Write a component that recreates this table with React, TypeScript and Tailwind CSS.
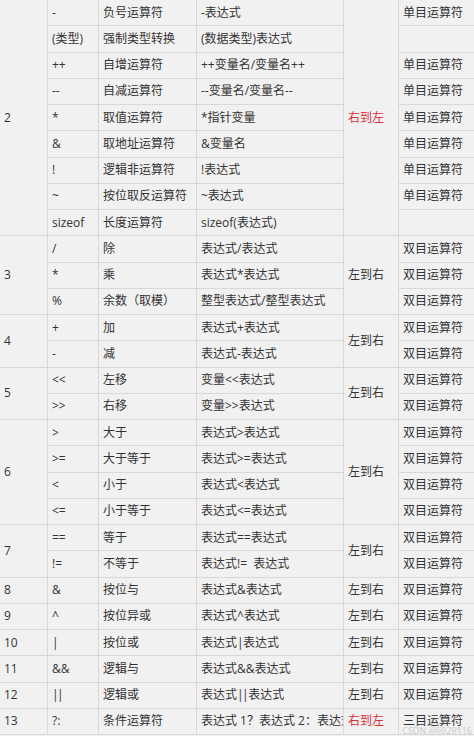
import React from "react";

type Cell = { t: string; span?: number; red?: boolean; col: number; tight?: boolean };

const rows: Cell[][] = [
  [
    { t: "2", span: 9, col: 1 },
    { t: "-", col: 2 },
    { t: "负号运算符", col: 3 },
    { t: "-表达式", col: 4 },
    { t: "右到左", span: 9, red: true, col: 5 },
    { t: "单目运算符", col: 6 },
  ],
  [{ t: "(类型)", col: 2 }, { t: "强制类型转换", col: 3 }, { t: "(数据类型)表达式", col: 4 }, { t: "", col: 6 }],
  [{ t: "++", col: 2 }, { t: "自增运算符", col: 3 }, { t: "++变量名/变量名++", col: 4 }, { t: "单目运算符", col: 6 }],
  [{ t: "--", col: 2 }, { t: "自减运算符", col: 3 }, { t: "--变量名/变量名--", col: 4 }, { t: "单目运算符", col: 6 }],
  [{ t: "*", col: 2 }, { t: "取值运算符", col: 3 }, { t: "*指针变量", col: 4 }, { t: "单目运算符", col: 6 }],
  [{ t: "&", col: 2 }, { t: "取地址运算符", col: 3 }, { t: "&变量名", col: 4 }, { t: "单目运算符", col: 6 }],
  [{ t: "!", col: 2 }, { t: "逻辑非运算符", col: 3 }, { t: "!表达式", col: 4 }, { t: "单目运算符", col: 6 }],
  [{ t: "~", col: 2 }, { t: "按位取反运算符", col: 3 }, { t: "~表达式", col: 4 }, { t: "单目运算符", col: 6 }],
  [{ t: "sizeof", col: 2 }, { t: "长度运算符", col: 3 }, { t: "sizeof(表达式)", col: 4 }, { t: "", col: 6 }],
  [
    { t: "3", span: 3, col: 1 },
    { t: "/", col: 2 },
    { t: "除", col: 3 },
    { t: "表达式/表达式", col: 4 },
    { t: "左到右", span: 3, col: 5 },
    { t: "双目运算符", col: 6 },
  ],
  [{ t: "*", col: 2 }, { t: "乘", col: 3 }, { t: "表达式*表达式", col: 4 }, { t: "双目运算符", col: 6 }],
  [{ t: "%", col: 2 }, { t: "余数（取模）", col: 3 }, { t: "整型表达式/整型表达式", col: 4 }, { t: "双目运算符", col: 6 }],
  [
    { t: "4", span: 2, col: 1 },
    { t: "+", col: 2 },
    { t: "加", col: 3 },
    { t: "表达式+表达式", col: 4 },
    { t: "左到右", span: 2, col: 5 },
    { t: "双目运算符", col: 6 },
  ],
  [{ t: "-", col: 2 }, { t: "减", col: 3 }, { t: "表达式-表达式", col: 4 }, { t: "双目运算符", col: 6 }],
  [
    { t: "5", span: 2, col: 1 },
    { t: "<<", col: 2 },
    { t: "左移", col: 3 },
    { t: "变量<<表达式", col: 4 },
    { t: "左到右", span: 2, col: 5 },
    { t: "双目运算符", col: 6 },
  ],
  [{ t: ">>", col: 2 }, { t: "右移", col: 3 }, { t: "变量>>表达式", col: 4 }, { t: "双目运算符", col: 6 }],
  [
    { t: "6", span: 4, col: 1 },
    { t: ">", col: 2 },
    { t: "大于", col: 3 },
    { t: "表达式>表达式", col: 4 },
    { t: "左到右", span: 4, col: 5 },
    { t: "双目运算符", col: 6 },
  ],
  [{ t: ">=", col: 2 }, { t: "大于等于", col: 3 }, { t: "表达式>=表达式", col: 4 }, { t: "双目运算符", col: 6 }],
  [{ t: "<", col: 2 }, { t: "小于", col: 3 }, { t: "表达式<表达式", col: 4 }, { t: "双目运算符", col: 6 }],
  [{ t: "<=", col: 2 }, { t: "小于等于", col: 3 }, { t: "表达式<=表达式", col: 4 }, { t: "双目运算符", col: 6 }],
  [
    { t: "7", span: 2, col: 1 },
    { t: "==", col: 2 },
    { t: "等于", col: 3 },
    { t: "表达式==表达式", col: 4 },
    { t: "左到右", span: 2, col: 5 },
    { t: "双目运算符", col: 6 },
  ],
  [{ t: "!=", col: 2 }, { t: "不等于", col: 3 }, { t: "表达式!=  表达式", col: 4 }, { t: "双目运算符", col: 6 }],
  [
    { t: "8", col: 1 },
    { t: "&", col: 2 },
    { t: "按位与", col: 3 },
    { t: "表达式&表达式", col: 4 },
    { t: "左到右", col: 5 },
    { t: "双目运算符", col: 6 },
  ],
  [
    { t: "9", col: 1 },
    { t: "^", col: 2 },
    { t: "按位异或", col: 3 },
    { t: "表达式^表达式", col: 4 },
    { t: "左到右", col: 5 },
    { t: "双目运算符", col: 6 },
  ],
  [
    { t: "10", col: 1 },
    { t: "|", col: 2 },
    { t: "按位或", col: 3 },
    { t: "表达式|表达式", col: 4, tight: true },
    { t: "左到右", col: 5 },
    { t: "双目运算符", col: 6 },
  ],
  [
    { t: "11", col: 1 },
    { t: "&&", col: 2 },
    { t: "逻辑与", col: 3 },
    { t: "表达式&&表达式", col: 4 },
    { t: "左到右", col: 5 },
    { t: "双目运算符", col: 6 },
  ],
  [
    { t: "12", col: 1 },
    { t: "||", col: 2, tight: true },
    { t: "逻辑或", col: 3 },
    { t: "表达式||表达式", col: 4, tight: true },
    { t: "左到右", col: 5 },
    { t: "双目运算符", col: 6 },
  ],
  [
    { t: "13", col: 1 },
    { t: "?:", col: 2 },
    { t: "条件运算符", col: 3 },
    { t: "表达式 1？表达式 2：表达式 3", col: 4 },
    { t: "右到左", red: true, col: 5 },
    { t: "三目运算符", col: 6 },
  ],
];

const spanClass: Record<number, string> = {
  1: "",
  2: "row-span-2",
  3: "row-span-3",
  4: "row-span-4",
  9: "row-span-9",
};

function renderText(c: Cell) {
  if (!c.tight) return c.t;
  const parts = c.t.split(/(\|+)/);
  return parts.map((p, i) =>
    p.startsWith("|") ? (
      <span key={i} className="tracking-[-1.5px] mr-[1px]">
        {p}
      </span>
    ) : (
      <span key={i}>{p}</span>
    )
  );
}

export default function App() {
  return (
    <div
      className="relative w-[474px] h-[736px] overflow-hidden bg-[#f1f1f1] text-[12px] text-[#333333]"
      style={{ fontFamily: '"Open Sans", "Noto Sans CJK SC", sans-serif' }}
    >
      <div className="grid grid-cols-[48px_51px_98px_147px_55px_75px] grid-rows-[repeat(28,26.25px)]">
        {rows.flat().map((c, i) => (
          <div
            key={i}
            className={[
              "flex items-center pl-[4px] overflow-hidden whitespace-pre border-b border-[#d8d8d8]",
              c.col !== 6 ? "border-r" : "",
              spanClass[c.span ?? 1],
              c.red ? "text-[#dc3038]" : "",
            ].join(" ")}
          >
            {renderText(c)}
          </div>
        ))}
      </div>
      <div className="absolute right-[2px] bottom-[1px] text-[9px] text-[#cbcbcb] leading-none">
        CSDN @li929116
      </div>
    </div>
  );
}
